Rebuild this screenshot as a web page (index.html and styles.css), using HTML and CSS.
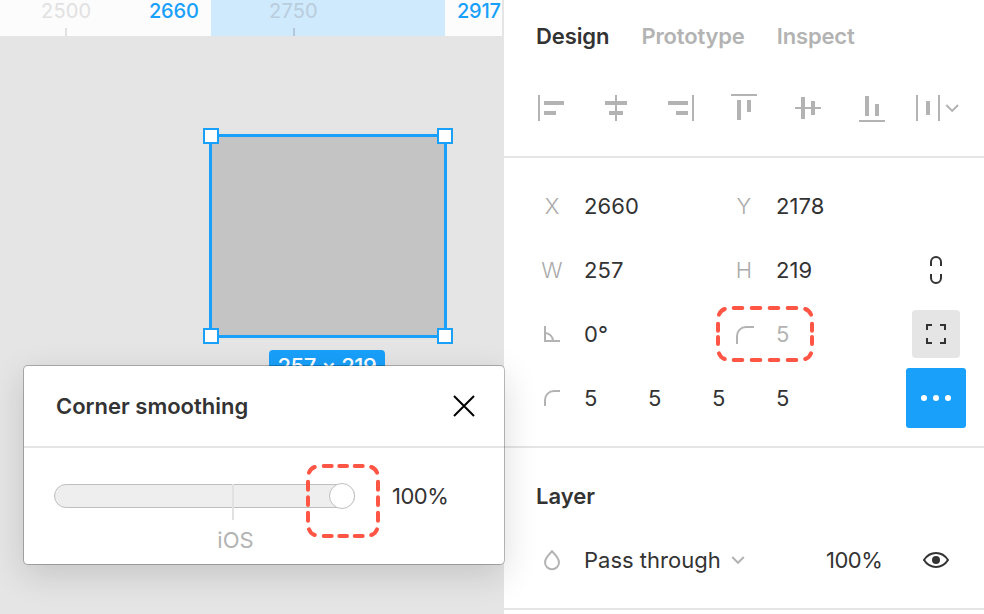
FILE: index.html
```
<!DOCTYPE html>
<html lang="en">
<head>
    <meta charset="UTF-8">
    <meta name="viewport" content="width=device-width, initial-scale=1.0">
    <title>Corner smoothing</title>
    <link rel="stylesheet" href="styles.css">
</head>
<body>
    <div class="app">
        <div class="canvas">
            <div class="ruler">
                <div class="ruler-range"></div>
                <span class="tick-label tick-2500">2500</span>
                <span class="tick-label tick-2660 active">2660</span>
                <span class="tick-label tick-2750">2750</span>
                <span class="tick-label tick-2917 active">2917</span>
                <i class="tick mark-2500"></i>
                <i class="tick mark-2750"></i>
            </div>
            <div class="shape">
                <i class="handle top left"></i>
                <i class="handle top right"></i>
                <i class="handle bottom left"></i>
                <i class="handle bottom right"></i>
            </div>
            <div class="size-badge">257 × 219</div>
        </div>

        <aside class="panel">
            <nav class="tabs">
                <span class="tab selected">Design</span>
                <span class="tab">Prototype</span>
                <span class="tab">Inspect</span>
            </nav>
            <div class="align-row">
                <svg width="64" height="64"><path d="M18 19h2v26h-2zM24 25h20v4H24zM24 35h12v4H24z"/></svg>
                <svg width="64" height="64"><path d="M31 19h2v26h-2zM21 25h22v4H21zM25 35h14v4H25z"/></svg>
                <svg width="64" height="64"><path d="M44 19h2v26h-2zM20 25h20v4H20zM28 35h12v4H28z"/></svg>
                <svg width="64" height="64"><path d="M19 18h26v2H19zM25 24h4v20h-4zM35 24h4v12h-4z"/></svg>
                <svg width="64" height="64"><path d="M19 31h26v2H19zM25 21h4v22h-4zM35 25h4v14h-4z"/></svg>
                <svg width="64" height="64"><path d="M19 44h26v2H19zM25 20h4v20h-4zM35 28h4v12h-4z"/></svg>
                <svg width="64" height="64"><path d="M12 19h2v26h-2zM22 25h4v14h-4zM34 19h2v26h-2z"/><path class="line" d="M42.3 29l5.9 5.9 5.9-5.9"/></svg>
            </div>

            <section class="section fields">
                <div class="row">
                    <span class="label">X</span>
                    <span class="value">2660</span>
                    <span class="label">Y</span>
                    <span class="value">2178</span>
                </div>
                <div class="row">
                    <span class="label">W</span>
                    <span class="value">257</span>
                    <span class="label">H</span>
                    <span class="value">219</span>
                    <svg class="icon dark" width="64" height="64"><path d="M27 28v-4a5 5 0 0 1 10 0v4M27 36v4a5 5 0 0 0 10 0v-4"/></svg>
                </div>
                <div class="row">
                    <svg class="icon" width="64" height="64"><path d="M25 24v15h15M25 31a8 8 0 0 1 8 8"/></svg>
                    <span class="value">0°</span>
                    <svg class="icon" width="64" height="64"><path d="M25 42v-8a9 9 0 0 1 9-9h8"/></svg>
                    <span class="value muted">5</span>
                    <span class="corners-btn">
                        <svg class="icon dark" width="48" height="48"><path d="M15 20v-5h5M28 15h5v5M33 28v5h-5M20 33h-5v-5"/></svg>
                    </span>
                    <!-- highlight around the corner radius field -->
                    <svg class="mark mark-radius" width="98" height="56">
                        <path d="M17.7 2h8.6M35.7 2h8.6M53.7 2h8.6M71.7 2h8.6"/>
                        <path d="M17.7 54h8.6M35.7 54h8.6M53.7 54h8.6M71.7 54h8.6"/>
                        <path d="M2 17.7v7M2 31v7M96 17.7v7M96 31v7"/>
                        <path d="M3 8.7Q4.5 4.5 8.7 3M95 8.7Q93.5 4.5 89.3 3M3 47.3Q4.5 51.5 8.7 53M95 47.3Q93.5 51.5 89.3 53"/>
                    </svg>
                </div>
                <div class="row corners">
                    <svg class="icon" width="64" height="64"><path d="M25 40v-6a9 9 0 0 1 9-9h6"/></svg>
                    <span class="value">5</span>
                    <span class="value">5</span>
                    <span class="value">5</span>
                    <span class="value">5</span>
                    <span class="more-btn"><i></i><i></i><i></i></span>
                </div>
            </section>

            <section class="section layer">
                <h2 class="heading">Layer</h2>
                <div class="row layer-row">
                    <svg class="icon" width="64" height="64"><path d="M32 23.3c3.6 3.7 7 7 7 11a7 7 0 0 1-14 0c0-4 3.4-7.3 7-11z"/></svg>
                    <span class="blend">Pass through
                        <svg class="icon" width="14" height="10"><path d="M1.2 2l5.8 5.8 5.8-5.8"/></svg>
                    </span>
                    <span class="value percent">100%</span>
                    <svg class="icon dark" width="64" height="64"><path d="M20 32c6-9.3 18-9.3 24 0-6 9.3-18 9.3-24 0z"/><circle class="pupil" cx="32" cy="32" r="4"/></svg>
                </div>
            </section>
        </aside>

        <div class="popup">
            <header class="popup-head">
                <h2 class="heading">Corner smoothing</h2>
                <svg class="close" width="24" height="24"><path d="M2 2l20 20M22 2L2 22"/></svg>
            </header>
            <div class="popup-body">
                <div class="slider">
                    <i class="stop"></i>
                    <i class="knob"></i>
                </div>
                <span class="percent">100%</span>
                <span class="stop-label">iOS</span>
                <!-- highlight around the slider knob -->
                <svg class="mark mark-knob" width="74" height="74">
                    <path d="M17.7 2h8M33.3 2h7.7M48.7 2h8M17.7 72h8M33.3 72h7.7M48.7 72h8"/>
                    <path d="M2 17.7v8M2 33.3v7.7M2 48.7v8M72 17.7v8M72 33.3v7.7M72 48.7v8"/>
                    <path d="M3 8.7Q4.5 4.5 8.7 3M71 8.7Q69.5 4.5 65.3 3M3 65.3Q4.5 69.5 8.7 71M71 65.3Q69.5 69.5 65.3 71"/>
                </svg>
            </div>
        </div>
    </div>
</body>
</html>
```
FILE: styles.css
```
* {
    box-sizing: border-box;
}
body {
    margin: 0;
    font-family: Inter, sans-serif;
    font-size: 22px;
    letter-spacing: 0.1px;
    line-height: 32px;
    color: #333;
    background: #fff;
}
.app {
    position: relative;
    display: flex;
    width: 984px;
    height: 614px;
    overflow: hidden;
}

/* Canvas */
.canvas {
    position: relative;
    width: 504px;
    background: #e5e5e5;
}
.ruler {
    position: relative;
    width: 502px;
    height: 36px;
    background: #fcfcfc;
    overflow: hidden;
}
.ruler-range {
    position: absolute;
    left: 211px;
    width: 234px;
    height: 36px;
    background: #cfe9fd;
}
.tick-label {
    position: absolute;
    top: -5px;
    font-size: 20px;
    letter-spacing: 0.2px;
    color: #e1e1e1;
}
.tick-label.active {
    color: #18a0fb;
    font-weight: 500;
    letter-spacing: -0.2px;
}
.tick-2500 { left: 41px; }
.tick-2660 { left: 149px; }
.tick-2750 { left: 269px; color: #b9cddc; }
.tick-2917 { left: 457px; }
.tick {
    position: absolute;
    bottom: 0;
    width: 2px;
    height: 8px;
    background: #e1e1e1;
}
.mark-2500 { left: 65px; }
.mark-2750 { left: 293px; background: #b2c8d8; }
.shape {
    position: absolute;
    left: 209px;
    top: 134px;
    width: 238px;
    height: 204px;
    background: #c4c4c4;
    border: 3px solid #18a0fb;
}
.handle {
    position: absolute;
    width: 16px;
    height: 16px;
    background: #fff;
    border: 2px solid #18a0fb;
}
.handle.top { top: -9px; }
.handle.bottom { bottom: -9px; }
.handle.left { left: -9px; }
.handle.right { right: -9px; }
.size-badge {
    position: absolute;
    left: 269px;
    top: 350px;
    width: 116px;
    height: 32px;
    border-radius: 4px;
    background: #18a0fb;
    color: #fff;
    font-size: 22px;
    font-weight: 500;
    letter-spacing: -0.4px;
    text-align: center;
}

/* Right panel */
.panel {
    width: 480px;
    background: #fff;
}
.tabs {
    display: flex;
    gap: 32px;
    height: 76px;
    padding: 20px 32px 0;
}
.tab {
    font-weight: 600;
    letter-spacing: -0.15px;
    color: #b3b3b3;
}
.tab.selected {
    letter-spacing: -0.1px;
    color: #333;
}
.align-row {
    display: flex;
    height: 82px;
    padding: 0 16px;
    border-bottom: 2px solid #e5e5e5;
    fill: #b3b3b3;
}
.line {
    fill: none;
    stroke: #b3b3b3;
    stroke-width: 2;
}
.section {
    border-bottom: 2px solid #e5e5e5;
}
.fields {
    height: 290px;
    padding: 16px 16px 0;
}
.row {
    position: relative;
    display: grid;
    grid-template-columns: 64px 128px 64px 128px 64px;
    align-items: center;
    height: 64px;
}
.row.corners {
    grid-template-columns: 64px 64px 64px 64px 128px 64px;
}
.row.layer-row {
    grid-template-columns: 64px 242px 78px 64px;
}
.label {
    text-align: center;
    font-weight: 300;
    color: #aaa;
}
.muted {
    color: #b3b3b3;
}
.percent {
    letter-spacing: -0.5px;
}
.icon {
    fill: none;
    stroke: #b3b3b3;
    stroke-width: 2;
}
.icon.dark {
    stroke: #333;
}
.pupil {
    fill: #333;
    stroke: none;
}
.corners-btn {
    display: flex;
    width: 48px;
    height: 48px;
    margin: auto;
    border-radius: 4px;
    background: #e5e5e5;
}
.more-btn {
    display: flex;
    align-items: center;
    justify-content: center;
    gap: 6px;
    width: 60px;
    height: 60px;
    margin: auto;
    border-radius: 3px;
    background: #18a0fb;
}
.more-btn i {
    width: 6px;
    height: 6px;
    border-radius: 50%;
    background: #fff;
}
.layer {
    height: 162px;
    padding: 16px 16px 0;
}
.heading {
    margin: 0;
    font-size: 22px;
    font-weight: 600;
    letter-spacing: 0;
}
.layer .heading {
    height: 64px;
    padding: 16px;
}
.blend {
    display: flex;
    align-items: center;
    gap: 10px;
    letter-spacing: 0;
}

/* Corner smoothing popup */
.popup {
    position: absolute;
    left: 23px;
    top: 365px;
    width: 482px;
    height: 200px;
    border: 1px solid rgba(0, 0, 0, 0.25);
    border-radius: 5px;
    background: #fff;
    background-clip: padding-box;
    box-shadow: 0 10px 34px rgba(0, 0, 0, 0.14);
}
.popup-head {
    display: flex;
    align-items: center;
    justify-content: space-between;
    height: 82px;
    padding: 0 28px 0 32px;
    border-bottom: 2px solid #e5e5e5;
}
.close {
    fill: none;
    stroke: #000;
    stroke-width: 2;
}
.popup-body {
    position: relative;
    display: grid;
    grid-template-columns: 301px 1fr;
    column-gap: 37px;
    row-gap: 12px;
    padding: 32px 30px 0;
}
.slider {
    position: relative;
    align-self: center;
    height: 24px;
    border: 1px solid #bfbfbf;
    border-radius: 12px;
    background: #eee;
}
.stop {
    position: absolute;
    left: 177px;
    top: -1px;
    width: 2px;
    height: 36px;
    background: #e1e1e1;
}
.knob {
    position: absolute;
    right: -1px;
    top: -2px;
    width: 26px;
    height: 26px;
    border: 1px solid #bfbfbf;
    border-radius: 50%;
    background: #fff;
}
.stop-label {
    padding-left: 62px;
    text-align: center;
    color: #b3b3b3;
}

/* Dashed highlights */
.mark {
    position: absolute;
    fill: none;
    stroke: #ff5544;
    stroke-width: 4;
    stroke-linecap: round;
}
.mark-radius {
    left: 196px;
    top: 4px;
}
.mark-knob {
    left: 282px;
    top: 16px;
}
```
